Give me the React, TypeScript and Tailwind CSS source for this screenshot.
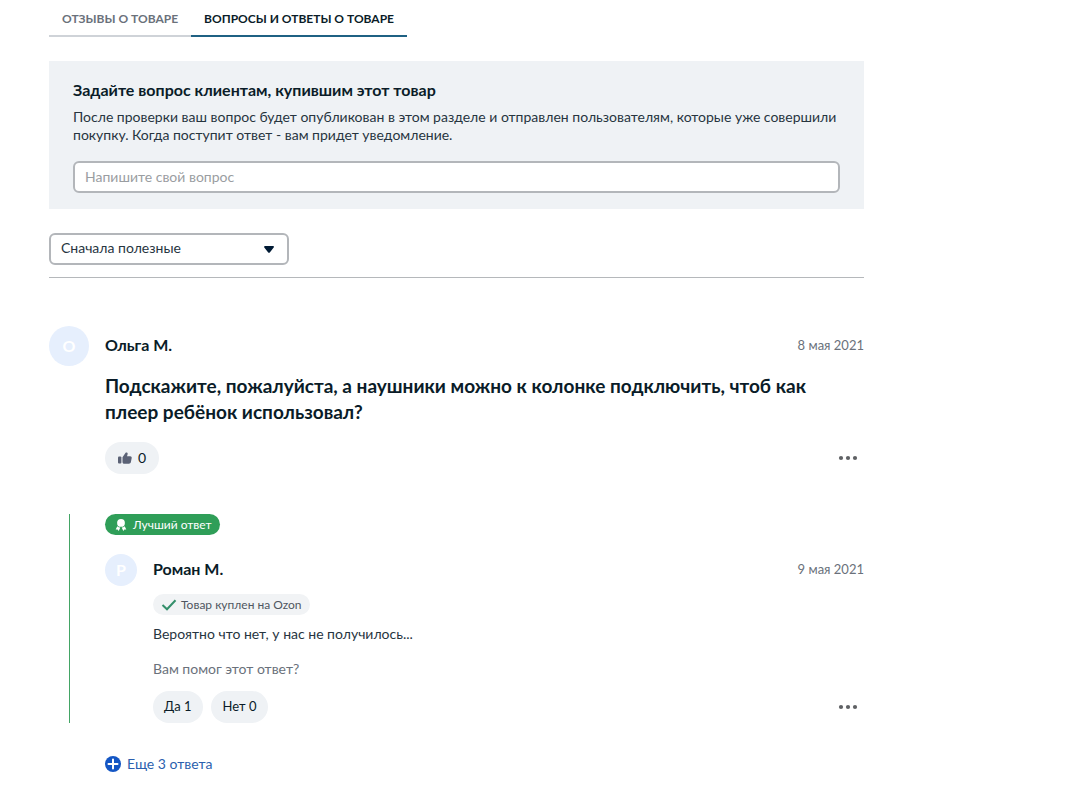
import {useState} from "react";

type AvatarProps = {
    letter: string
    className: string
}

const Avatar = ({letter, className}: AvatarProps) => {
    return (
        <div className={`flex shrink-0 items-center justify-center rounded-full bg-[#e6effd] text-base font-bold text-white ${className}`}>
            {letter}
        </div>
    )
}

const MoreButton = () => {
    return (
        <button type="button" aria-label="Ещё" className="flex h-8 w-8 items-center justify-center">
            <svg width="20" height="6" viewBox="0 0 20 6" fill="#5f6164">
                <circle cx="3" cy="3" r="2.1"/>
                <circle cx="10" cy="3" r="2.1"/>
                <circle cx="17" cy="3" r="2.1"/>
            </svg>
        </button>
    )
}

const ThumbIcon = () => {
    return (
        <svg width="14" height="12" viewBox="0 0 14 12" fill="#5a6175">
            <rect x="0" y="4.6" width="3.4" height="7" rx="1"/>
            <path d="M4.5 5.3 7.6.8C8.2 0 9.7.4 9.7 1.6c0 .9-.3 1.7-.7 2.6h3.2c1 0 1.7.8 1.5 1.8l-.8 4c-.2 1-1 1.7-2 1.7H6.3c-1 0-1.8-.8-1.8-1.8z"/>
        </svg>
    )
}

const MedalIcon = () => {
    return (
        <svg width="12" height="12" viewBox="0 0 12 12" fill="white">
            <circle cx="6" cy="3.9" r="3.9"/>
            <path d="M2.3 7.2 .7 10.6l1.9-.1L3.7 12l1.6-3.4a5 5 0 0 1-3-1.4zM9.7 7.2l1.6 3.4-1.9-.1L8.3 12 6.7 8.6a5 5 0 0 0 3-1.4z"/>
        </svg>
    )
}

const Tabs = () => {
    return (
        <nav className="flex text-xs font-bold leading-4">
            <a href="#reviews" className="border-b-2 border-[#cfd3d8] px-[13px] pt-[11px] pb-2 text-[#6a717b]">
                ОТЗЫВЫ О ТОВАРЕ
            </a>
            <a href="#questions" className="border-b-2 border-[#1f6183] px-[13px] pt-[11px] pb-2">
                ВОПРОСЫ И ОТВЕТЫ О ТОВАРЕ
            </a>
        </nav>
    )
}

const AskForm = () => {
    const [question, setQuestion] = useState("")

    return (
        <form className="mt-6 bg-[#eff2f5] px-6 pt-[17px] pb-4" onSubmit={(e) => e.preventDefault()}>
            <label htmlFor="question" className="block text-base font-bold leading-6">
                Задайте вопрос клиентам, купившим этот товар
            </label>
            <p className="mt-1.5 text-sm leading-[18px] text-[#27353f]">
                После проверки ваш вопрос будет опубликован в этом разделе и отправлен пользователям, которые уже
                совершили покупку. Когда поступит ответ - вам придет уведомление.
            </p>
            <input
                id="question"
                type="text"
                value={question}
                onChange={(e) => setQuestion(e.target.value)}
                placeholder="Напишите свой вопрос"
                className="mt-[17px] block h-8 w-full rounded-md border-2 border-[#b3b6ba] bg-white px-2.5 pb-0.5 text-sm placeholder:text-[#9a9da1]"
            />
        </form>
    )
}

const Sorting = () => {
    return (
        <div className="mt-6 border-b border-[#b5b8bb] pb-3">
            <div className="relative w-60">
                <select
                    aria-label="Сортировка"
                    className="block h-8 w-full appearance-none rounded-md border-2 border-[#b3b6ba] bg-white px-2.5 pb-0.5 text-sm text-[#27353f]"
                >
                    <option>Сначала полезные</option>
                </select>
                <svg width="10" height="7" viewBox="0 0 10 7" fill="#001a34"
                     className="pointer-events-none absolute top-[13px] right-[15px]">
                    <path d="M1 0h8c.8 0 1.2.9.7 1.5L6 6.3c-.5.7-1.5.7-2 0L.3 1.5C-.2.9.2 0 1 0z"/>
                </svg>
            </div>
        </div>
    )
}

const Answer = () => {
    return (
        <div className="ml-5 mt-10 border-l border-[#43a565] pl-[35px]">
            <span className="flex h-[21px] w-fit items-center gap-1.5 rounded-full bg-[#2f9e58] pr-2 pl-2.5 text-xs text-white">
                <MedalIcon/>
                Лучший ответ
            </span>
            <div className="mt-[19px] flex items-center gap-4">
                <Avatar letter="Р" className="h-8 w-8"/>
                <h3 className="flex-1 pb-0.5 text-base font-bold">Роман М.</h3>
                <span className="text-[13px] text-[#6a717b]">9 мая 2021</span>
            </div>
            <div className="ml-12">
                <span className="mt-2 flex h-[21px] w-fit items-center gap-1 rounded-full bg-[#f1f3f5] px-2 text-xs text-[#4f5661]">
                    <svg width="16" height="12" viewBox="0 0 16 12" fill="none" stroke="#348f6b" strokeWidth="2">
                        <path d="M1.5 6 6 10.3 14.5 1.3"/>
                    </svg>
                    Товар куплен на Ozon
                </span>
                <p className="mt-2.5 text-sm leading-[18px] text-[#27353f]">Вероятно что нет, у нас не получилось...</p>
                <p className="mt-[17px] text-sm leading-[18px] text-[#6a717b]">Вам помог этот ответ?</p>
                <div className="mt-[13px] flex items-center gap-2 text-[13px]">
                    <button type="button" className="h-8 rounded-full bg-[#eff2f5] px-[11px]">Да 1</button>
                    <button type="button" className="h-8 rounded-full bg-[#eff2f5] px-3">Нет 0</button>
                    <div className="ml-auto"><MoreButton/></div>
                </div>
            </div>
        </div>
    )
}

const Question = () => {
    return (
        <article className="mt-12">
            <div className="flex items-center gap-4">
                <Avatar letter="О" className="h-10 w-10"/>
                <h3 className="flex-1 pb-0.5 text-base font-bold">Ольга М.</h3>
                <span className="text-[13px] text-[#6a717b]">8 мая 2021</span>
            </div>
            <div className="ml-14">
                <h2 className="mt-[7px] pr-8 text-[19px] font-bold leading-[26px]">
                    Подскажите, пожалуйста, а наушники можно к колонке подключить, чтоб как плеер ребёнок использовал?
                </h2>
                <div className="mt-[17px] flex items-center justify-between">
                    <button type="button" className="flex h-8 items-center gap-1.5 rounded-full bg-[#eff2f5] px-[13px] text-sm">
                        <ThumbIcon/>
                        0
                    </button>
                    <MoreButton/>
                </div>
            </div>
            <Answer/>
            <button type="button" className="ml-14 mt-8 flex items-center gap-1.5 text-sm leading-[18px] text-[#2b5fae]">
                <svg width="16" height="16" viewBox="0 0 16 16">
                    <circle cx="8" cy="8" r="8" fill="#1456c4"/>
                    <path d="M8 3.5v9M3.5 8h9" stroke="white" strokeWidth="2" strokeLinecap="round"/>
                </svg>
                Еще 3 ответа
            </button>
        </article>
    )
}

const App = () => {
    return (
        <main className="ml-[49px] max-w-[815px] pb-4 font-['Lato','Liberation_Sans',sans-serif] text-[#0a1c28]">
            <Tabs/>
            <AskForm/>
            <Sorting/>
            <Question/>
        </main>
    )
}

export default App
